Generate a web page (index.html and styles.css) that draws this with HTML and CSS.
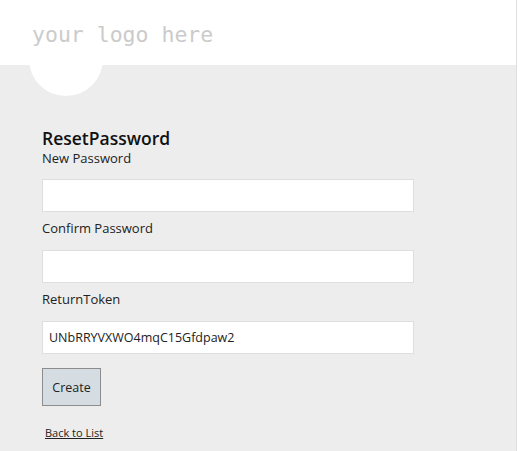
FILE: index.html
```html
<!DOCTYPE html>
<html lang="en">
<head>
  <meta charset="UTF-8">
  <meta name="viewport" content="width=device-width, initial-scale=1.0">
  <title>ResetPassword</title>
  <link rel="stylesheet" href="styles.css">
</head>
<body>
  <div class="page">
    <header class="top">
      <div class="logo-circle"></div>
      <p class="site-title">your logo here</p>
    </header>

    <div class="main">
      <h2>ResetPassword</h2>
      <form class="reset-form">
        <label for="newPassword">New Password</label>
        <input type="password" id="newPassword">

        <label for="confirmPassword">Confirm Password</label>
        <input type="password" id="confirmPassword">

        <label for="returnToken">ReturnToken</label>
        <input type="text" id="returnToken" value="UNbRRYVXWO4mqC15Gfdpaw2">

        <button type="button" class="btn">Create</button>
      </form>
      <a class="back" href="#">Back to List</a>
    </div>
  </div>
</body>
</html>
```

FILE: styles.css
```css
html, body { margin: 0; padding: 0; background: #fff; }
body { font-family: "Open Sans", "Noto Sans", sans-serif; color: #222; }
.page { width: 516px; height: 451px; background: #ededed; border-right: 1px solid #e0e0e0; overflow: hidden; }
.top { position: relative; height: 65px; background: #fff; }
.logo-circle { position: absolute; left: 29px; top: 22px; width: 74px; height: 74px; border-radius: 50%; background: #fff; }
.site-title { position: relative; margin: 0; padding: 21px 0 0 32px; font-family: "DejaVu Sans Mono", monospace; font-size: 21.5px; line-height: 28px; color: #cbcbcb; }
.main { padding: 62px 0 0 42px; }
h2 { margin: 0; font-size: 17.5px; font-weight: 600; line-height: 22px; color: #111; }
.reset-form { display: flex; flex-direction: column; align-items: flex-start; }
label { margin: 7px 0 13px; font-size: 13px; line-height: 18px; color: #222; }
label:first-child { margin: 0 0 12px; }
input { box-sizing: border-box; width: 372px; height: 33px; margin: 0; padding: 0 6px; border: 1px solid #dedede; background: #fff; font-family: inherit; font-size: 12.5px; color: #222; }
.btn { box-sizing: border-box; width: 59px; height: 38px; margin-top: 14px; background: #d5dde3; border: 1px solid #8c8c8c; font-family: inherit; font-size: 12.5px; color: #222; padding: 0; }
.back { display: inline-block; margin: 19px 0 0 3px; font-size: 11px; color: #222; text-decoration: underline; }
```
